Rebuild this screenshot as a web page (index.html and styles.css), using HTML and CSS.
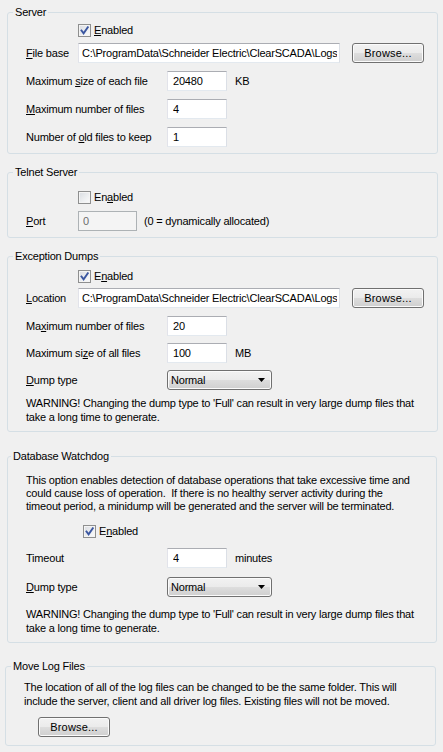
FILE: index.html
```html
<!DOCTYPE html>
<html>
<head>
<meta charset="utf-8">
<link rel="stylesheet" href="styles.css">
</head>
<body>
<fieldset class="grp grp-server">
  <legend>Server</legend>
  <div class="body body-server">
    <label class="chkrow">
      <span class="box"><svg viewBox="0 0 11 11" width="11" height="11"><polyline points="2.5,5.5 4.6,8.3 8.8,2.2" /></svg></span>
      <span><u>E</u>nabled</span>
    </label>
    <div class="row mt6">
      <span class="lbl"><u>F</u>ile base</span>
      <input class="txt wide" value="C:\ProgramData\Schneider Electric\ClearSCADA\Logs">
      <button class="btn side">Browse...</button>
    </div>
    <div class="row mt8">
      <span class="lbl lbl-w">Maximum <u>s</u>ize of each file</span>
      <input class="txt num" value="20480">
      <span class="unit">KB</span>
    </div>
    <div class="row mt8">
      <span class="lbl lbl-w"><u>M</u>aximum number of files</span>
      <input class="txt num" value="4">
    </div>
    <div class="row mt8">
      <span class="lbl lbl-w">Number of <u>o</u>ld files to keep</span>
      <input class="txt num" value="1">
    </div>
  </div>
</fieldset>

<fieldset class="grp">
  <legend>Telnet Server</legend>
  <div class="body">
    <label class="chkrow mt12">
      <span class="box off"></span>
      <span>En<u>a</u>bled</span>
    </label>
    <div class="row mt7">
      <span class="lbl"><u>P</u>ort</span>
      <input class="txt port" value="0" disabled>
      <span class="unit unit-port">(0 = dynamically allocated)</span>
    </div>
  </div>
</fieldset>

<fieldset class="grp">
  <legend>Exception Dumps</legend>
  <div class="body body-7">
    <label class="chkrow mt7">
      <span class="box"><svg viewBox="0 0 11 11" width="11" height="11"><polyline points="2.5,5.5 4.6,8.3 8.8,2.2" /></svg></span>
      <span>E<u>n</u>abled</span>
    </label>
    <div class="row mt5">
      <span class="lbl"><u>L</u>ocation</span>
      <input class="txt wide" value="C:\ProgramData\Schneider Electric\ClearSCADA\Logs">
      <button class="btn side">Browse...</button>
    </div>
    <div class="row mt8">
      <span class="lbl lbl-w">Ma<u>x</u>imum number of files</span>
      <input class="txt num" value="20">
    </div>
    <div class="row mt7">
      <span class="lbl lbl-w">Maximum si<u>z</u>e of all files</span>
      <input class="txt num" value="100">
      <span class="unit">MB</span>
    </div>
    <div class="row mt7">
      <span class="lbl lbl-w"><u>D</u>ump type</span>
      <div class="combo"><span>Normal</span><svg class="arrow" viewBox="0 0 7 4" width="7" height="4"><polygon points="0,0 7,0 3.5,4" /></svg></div>
    </div>
    <p class="note mt6">WARNING! Changing the dump type to 'Full' can result in very large dump files that<br>take a long time to generate.</p>
  </div>
</fieldset>

<fieldset class="grp grp-watch">
  <legend>Database Watchdog</legend>
  <div class="body body-7">
    <p class="para mt11">This option enables detection of database operations that take excessive time and<br>could cause loss of operation.&nbsp; If there is no healthy server activity during the<br>timeout period, a minidump will be generated and the server will be terminated.</p>
    <label class="chkrow chkrow-watch mt12">
      <span class="box"><svg viewBox="0 0 11 11" width="11" height="11"><polyline points="2.5,5.5 4.6,8.3 8.8,2.2" /></svg></span>
      <span>E<u>n</u>abled</span>
    </label>
    <div class="row mt10">
      <span class="lbl lbl-w">Timeout</span>
      <input class="txt num" value="4">
      <span class="unit">minutes</span>
    </div>
    <div class="row mt9">
      <span class="lbl lbl-w"><u>D</u>ump type</span>
      <div class="combo"><span>Normal</span><svg class="arrow" viewBox="0 0 7 4" width="7" height="4"><polygon points="0,0 7,0 3.5,4" /></svg></div>
    </div>
    <p class="note mt10">WARNING! Changing the dump type to 'Full' can result in very large dump files that<br>take a long time to generate.</p>
  </div>
</fieldset>

<fieldset class="grp grp-move">
  <legend>Move Log Files</legend>
  <div class="body body-8">
    <p class="note mt7">The location of all of the log files can be changed to be the same folder. This will<br>include the server, client and all driver log files. Existing files will not be moved.</p>
    <button class="btn move">Browse...</button>
  </div>
</fieldset>
</body>
</html>
```

FILE: styles.css
```css
html, body {
  margin: 0;
  padding: 0;
  background: #f0f0f0;
}

body {
  font-family: "Liberation Sans", Arial, sans-serif;
  font-size: 11px;
  line-height: 13px;
  color: #000;
  letter-spacing: -0.2px;
}

.grp {
  margin: 12px 5px 0 7px;
  padding: 0;
  border: 1px solid #d5dfe5;
  border-radius: 3px;
  min-inline-size: 0;
}

.grp-server {
  margin-top: 6px;
}

.grp-watch {
  margin: 18px 6px 0 7px;
}

.grp-move {
  margin: 17px 7px 0 5px;
}

.grp legend {
  margin-left: 5px;
  padding: 0 2px;
  line-height: 13px;
}

.grp-watch legend {
  margin-left: 3px;
}

.body {
  padding: 0 8px 6px 18px;
}

.body-server {
  padding-top: 5px;
}

.body-7 {
  padding-bottom: 7px;
}

.body-8 {
  padding-bottom: 8px;
}

.mt5 { margin-top: 5px; }
.mt6 { margin-top: 6px; }
.mt7 { margin-top: 7px; }
.mt8 { margin-top: 8px; }
.mt9 { margin-top: 9px; }
.mt10 { margin-top: 10px; }
.mt11 { margin-top: 11px; }
.mt12 { margin-top: 12px; }

.chkrow {
  display: flex;
  align-items: center;
  height: 13px;
  padding-left: 52px;
  gap: 3px;
}

.chkrow-watch {
  padding-left: 57px;
}

.box {
  box-sizing: border-box;
  width: 13px;
  height: 13px;
  border: 1px solid #8e8f8f;
  background: linear-gradient(135deg, #d9dce1 0%, #eef0f2 60%, #fbfbfb 100%);
  box-shadow: inset 0 0 0 1px #f4f4f4;
  display: flex;
  align-items: center;
  justify-content: center;
  flex: none;
}

.box svg polyline {
  fill: none;
  stroke: #3a56a0;
  stroke-width: 1.9;
  stroke-linecap: square;
}

.row {
  display: flex;
  align-items: center;
  height: 20px;
}

.lbl {
  width: 52px;
  flex: none;
  white-space: nowrap;
}

.lbl-w {
  width: 141px;
}

.txt {
  box-sizing: border-box;
  height: 20px;
  margin: 0;
  border: 1px solid;
  border-color: #abadb3 #dbdfe6 #e3e9ef #e2e3ea;
  background: #fff;
  font: inherit;
  letter-spacing: inherit;
  color: #000;
  outline: none;
}

.wide {
  width: 262px;
  padding: 0 2px 0 3px;
}

.num {
  width: 60px;
  padding: 0 4px 0 5px;
}

.port {
  width: 59px;
  padding: 0 4px 0 4px;
}

.port:disabled {
  background: #f4f4f4;
  border-color: #adb2b5;
  color: #6d6d6d;
}

.unit {
  margin-left: 8px;
  white-space: nowrap;
}

.unit-port {
  margin-left: 7px;
}

.btn {
  box-sizing: border-box;
  width: 72px;
  height: 20px;
  padding: 0;
  margin: 0;
  border: 1px solid #707070;
  border-radius: 3px;
  background: linear-gradient(#f2f2f2 0%, #ebebeb 48%, #dddddd 52%, #cfcfcf 100%);
  box-shadow: inset 0 0 0 1px #fbfbfb;
  font: inherit;
  letter-spacing: 0.2px;
  color: #000;
}

.side {
  margin-left: 12px;
}

.move {
  display: block;
  margin: 9px 0 0 14px;
}

.combo {
  box-sizing: border-box;
  width: 105px;
  height: 20px;
  border: 1px solid #707070;
  border-radius: 3px;
  background: linear-gradient(#f2f2f2 0%, #ebebeb 48%, #dddddd 52%, #cfcfcf 100%);
  box-shadow: inset 0 0 0 1px #fbfbfb;
  display: flex;
  align-items: center;
  justify-content: space-between;
  padding: 0 6px 0 3px;
}

.arrow polygon {
  fill: #000;
}

.note, .para {
  margin-bottom: 0;
  line-height: 14px;
  white-space: nowrap;
}

.para {
  line-height: 13px;
}
```
